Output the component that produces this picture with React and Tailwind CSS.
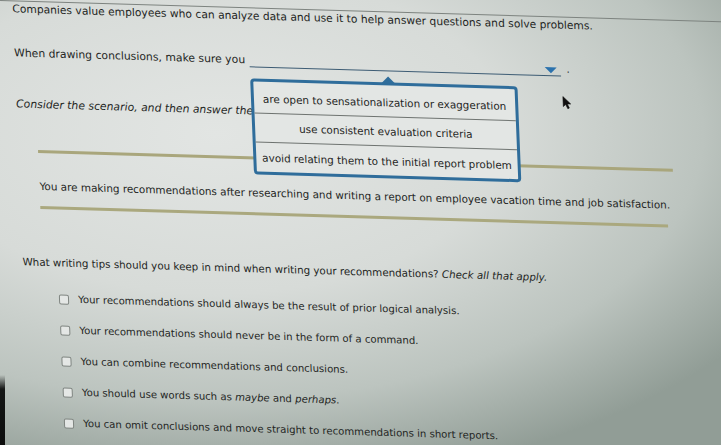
import { useState } from 'react'

const OPTIONS = [
  'are open to sensationalization or exaggeration',
  'use consistent evaluation criteria',
  'avoid relating them to the initial report problem',
]

const TIPS = [
  <>Your recommendations should always be the result of prior logical analysis.</>,
  <>Your recommendations should never be in the form of a command.</>,
  <>You can combine recommendations and conclusions.</>,
  <>
    You should use words such as <i>maybe</i> and <i>perhaps</i>.
  </>,
  <>You can omit conclusions and move straight to recommendations in short reports.</>,
]

export default function App() {
  const [checked, setChecked] = useState([false, false, false, false, false])

  const toggle = (i) => setChecked((c) => c.map((v, j) => (j === i ? !v : v)))

  return (
    <div className="relative w-full h-[445px] overflow-hidden bg-[radial-gradient(ellipse_90%_80%_at_30%_30%,#e2e5e3_0%,#d7dbd8_45%,#bcc4bf_75%,#919d96_100%)] font-['DejaVu_Sans',Verdana,sans-serif] leading-[14px] text-[#232523]">
      <div className="relative h-full origin-top-left skew-x-[2.3deg] skew-y-[1.7deg] border-t border-[#7d837f] px-3">
        <p className="pt-px text-[10.7px] whitespace-nowrap">
          Companies value employees who can analyze data and use it to help answer questions and solve problems.
        </p>

        <div className="mt-[30px] flex items-start text-[10.8px] whitespace-nowrap">
          <span>When drawing conclusions, make sure you</span>
          <span className="relative ml-1 h-[14px] w-[311px] border-b-[1.5px] border-[#3d5c74]">
            <span className="absolute right-[4px] top-[5px] h-0 w-0 border-x-[6px] border-t-[6px] border-x-transparent border-t-[#2b72ad]" />
          </span>
          <span className="ml-1.5">.</span>
        </div>

        <p className="mt-[37px] text-[10.8px] italic whitespace-nowrap">
          Consider the scenario, and then answer the question.
        </p>

        <div className="ml-5 mt-[38px] h-[3px] w-[634px] bg-[#a9a67c]" />

        <p className="ml-5 mt-[26px] text-[10.4px] whitespace-nowrap">
          You are making recommendations after researching and writing a report on employee vacation time and job satisfaction.
        </p>

        <div className="ml-5 mt-[13px] h-[3px] w-[627px] bg-[#aaa87e]" />

        <p className="mt-[46px] text-[10.3px] whitespace-nowrap">
          What writing tips should you keep in mind when writing your recommendations? <i>Check all that apply.</i>
        </p>

        <ul className="mt-[23px] ml-[35px] flex flex-col gap-[17px] text-[10.1px]">
          {TIPS.map((t, i) => (
            <li key={i} className="flex h-[14px] items-center whitespace-nowrap">
              <button
                onClick={() => toggle(i)}
                className="mr-[9px] flex h-[10px] w-[10px] items-center justify-center rounded-[2px] border border-[#7f8581] bg-[#e4e7e5]"
              >
                {checked[i] && <span className="h-[4px] w-[4px] bg-[#2b72ad]" />}
              </button>
              <span>{t}</span>
            </li>
          ))}
        </ul>

        {/* open dropdown menu */}
        <div className="absolute left-[247px] top-[70px] w-[267px] rounded-[4px] border-[3px] border-[#2f6d9b] bg-[#e3e6e4] pt-[3px] text-[10.4px]">
          <span className="absolute -top-[9px] left-[128px] h-0 w-0 border-x-[7px] border-b-[7px] border-x-transparent border-b-[#2f6d9b]" />
          {OPTIONS.map((o, i) => (
            <div
              key={o}
              className={`flex h-[29px] items-center justify-center whitespace-nowrap ${i < OPTIONS.length - 1 ? 'border-b border-[#6e7370]' : ''}`}
            >
              {o}
            </div>
          ))}
        </div>

        {/* mouse pointer */}
        <svg className="absolute left-[558px] top-[78px]" width="10" height="14" viewBox="0 0 10 14">
          <path d="M1 1 L1 11 L3.5 8.8 L5.5 13 L7 12.3 L5.1 8.2 L8.5 8.2 Z" fill="#111" stroke="#111" strokeWidth="0.6" strokeLinejoin="round" />
        </svg>
      </div>

      {/* monitor bezel at lower left */}
      <div className="absolute bottom-0 left-0 h-[70px] w-[5px] bg-[linear-gradient(to_bottom,transparent,#151716_20%,#0b0c0c)]" />
    </div>
  )
}
